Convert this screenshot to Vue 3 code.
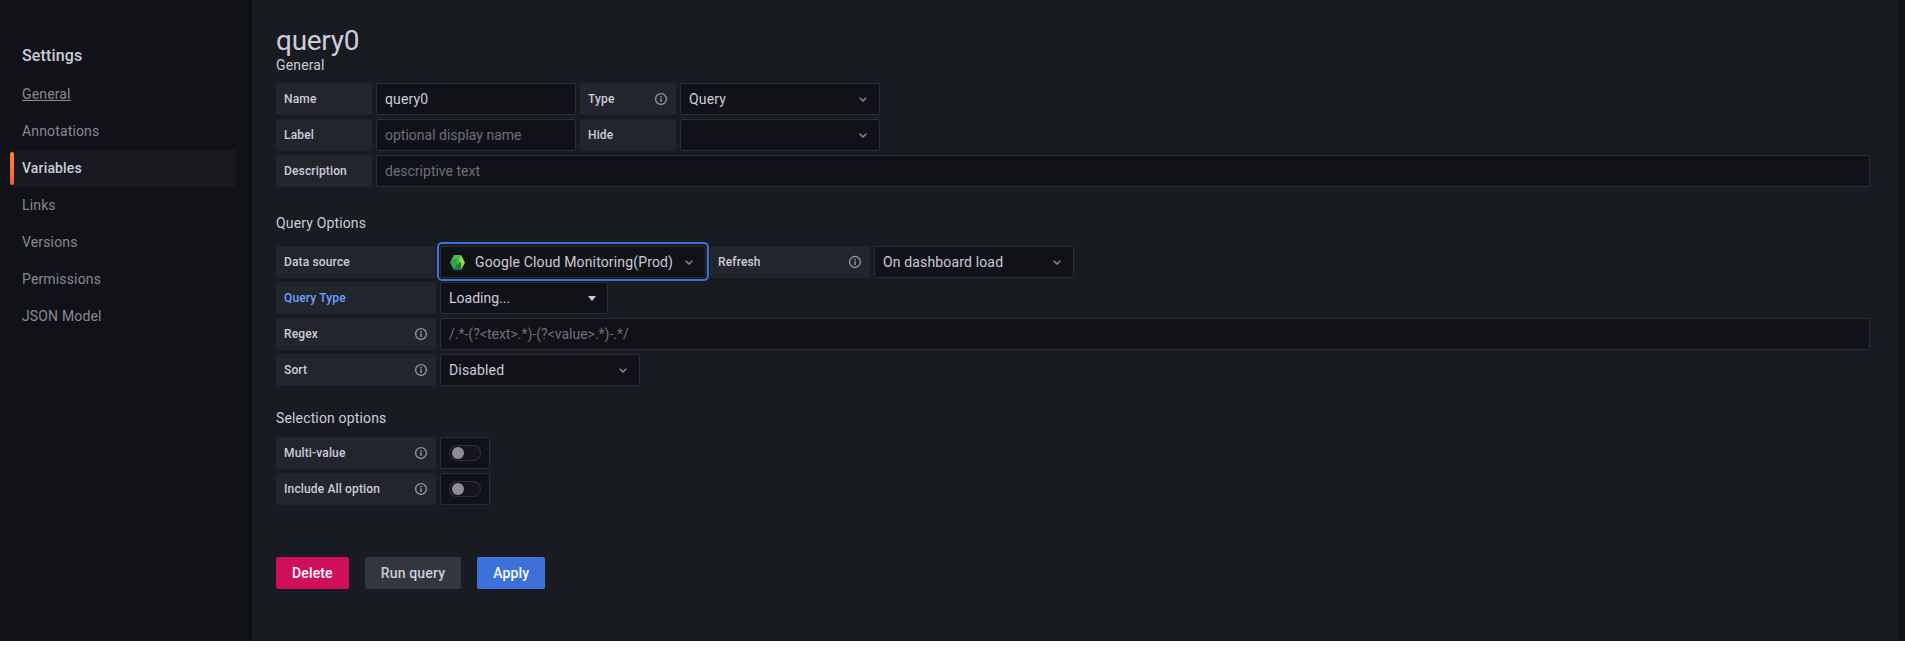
<script setup>
const nav = ['General', 'Annotations', 'Variables', 'Links', 'Versions', 'Permissions', 'JSON Model']
</script>

<template>
  <div class="page">
    <aside class="side">
      <h2 class="side-title">Settings</h2>
      <nav class="nav">
        <a v-for="n in nav" :key="n" class="nav-item" :class="{ active: n === 'Variables', under: n === 'General' }">{{ n }}</a>
      </nav>
    </aside>
    <main class="main">
      <h1 class="title">query0</h1>
      <div class="sub">General</div>

      <div class="rows">
        <div class="row">
          <div class="lab w96">Name</div>
          <div class="box w200 val">query0</div>
          <div class="lab w96">Type
            <svg class="info" viewBox="0 0 24 24"><circle cx="12" cy="12" r="9.3" fill="none" stroke="currentColor" stroke-width="2.4"/><rect x="10.7" y="10.8" width="2.6" height="6.4" fill="currentColor"/><rect x="10.7" y="6.8" width="2.6" height="2.6" fill="currentColor"/></svg>
          </div>
          <div class="box w200 sel val">Query
            <svg class="chev" viewBox="0 0 24 24"><path d="M7 10l5 5 5-5" fill="none" stroke="currentColor" stroke-width="2"/></svg>
          </div>
        </div>
        <div class="row">
          <div class="lab w96">Label</div>
          <div class="box w200 ph">optional display name</div>
          <div class="lab w96">Hide</div>
          <div class="box w200 sel">
            <svg class="chev" viewBox="0 0 24 24"><path d="M7 10l5 5 5-5" fill="none" stroke="currentColor" stroke-width="2"/></svg>
          </div>
        </div>
        <div class="row">
          <div class="lab w96">Description</div>
          <div class="box grow ph">descriptive text</div>
        </div>
      </div>

      <h3 class="sect q">Query Options</h3>
      <div class="rows">
        <div class="row">
          <div class="lab w160">Data source</div>
          <div class="box ds val">
            <svg class="logo" viewBox="0 0 15 15">
              <path d="M4 0H11L8 4.5H4.5L0 7.5Z" fill="#4cbb4f"/>
              <path d="M0 7.5L4.5 4.5L7 10.5L4 15Z" fill="#2fa84a"/>
              <path d="M4.5 4.5H8L10.5 7.5L7 10.5Z" fill="#3cb54a"/>
              <path d="M11 0L15 7.5L11 15L10.5 7.5L8 4.5Z" fill="#9ad14b"/>
              <path d="M4 15L7 10.5L10.5 7.5L11 15Z" fill="#11804a"/>
            </svg>
            <span class="ds-name">Google Cloud Monitoring(Prod)</span>
            <svg class="chev" viewBox="0 0 24 24"><path d="M7 10l5 5 5-5" fill="none" stroke="currentColor" stroke-width="2"/></svg>
          </div>
          <div class="lab w160">Refresh
            <svg class="info" viewBox="0 0 24 24"><circle cx="12" cy="12" r="9.3" fill="none" stroke="currentColor" stroke-width="2.4"/><rect x="10.7" y="10.8" width="2.6" height="6.4" fill="currentColor"/><rect x="10.7" y="6.8" width="2.6" height="2.6" fill="currentColor"/></svg>
          </div>
          <div class="box w200 sel val">On dashboard load
            <svg class="chev" viewBox="0 0 24 24"><path d="M7 10l5 5 5-5" fill="none" stroke="currentColor" stroke-width="2"/></svg>
          </div>
        </div>
        <div class="row">
          <div class="lab w160 blue">Query Type</div>
          <div class="box w168 sel val nols">Loading...
            <span class="caret"></span>
          </div>
        </div>
        <div class="row">
          <div class="lab w160">Regex
            <svg class="info" viewBox="0 0 24 24"><circle cx="12" cy="12" r="9.3" fill="none" stroke="currentColor" stroke-width="2.4"/><rect x="10.7" y="10.8" width="2.6" height="6.4" fill="currentColor"/><rect x="10.7" y="6.8" width="2.6" height="2.6" fill="currentColor"/></svg>
          </div>
          <div class="box grow ph">/.*-(?&lt;text&gt;.*)-(?&lt;value&gt;.*)-.*/</div>
        </div>
        <div class="row">
          <div class="lab w160">Sort
            <svg class="info" viewBox="0 0 24 24"><circle cx="12" cy="12" r="9.3" fill="none" stroke="currentColor" stroke-width="2.4"/><rect x="10.7" y="10.8" width="2.6" height="6.4" fill="currentColor"/><rect x="10.7" y="6.8" width="2.6" height="2.6" fill="currentColor"/></svg>
          </div>
          <div class="box w200 sel val">Disabled
            <svg class="chev" viewBox="0 0 24 24"><path d="M7 10l5 5 5-5" fill="none" stroke="currentColor" stroke-width="2"/></svg>
          </div>
        </div>
      </div>

      <h3 class="sect s">Selection options</h3>
      <div class="rows">
        <div class="row" v-for="t in ['Multi-value', 'Include All option']" :key="t">
          <div class="lab w160">{{ t }}
            <svg class="info" viewBox="0 0 24 24"><circle cx="12" cy="12" r="9.3" fill="none" stroke="currentColor" stroke-width="2.4"/><rect x="10.7" y="10.8" width="2.6" height="6.4" fill="currentColor"/><rect x="10.7" y="6.8" width="2.6" height="2.6" fill="currentColor"/></svg>
          </div>
          <div class="box sw"><span class="track"><span class="knob"></span></span></div>
        </div>
      </div>

      <div class="btns">
        <button class="btn del">Delete</button>
        <button class="btn run">Run query</button>
        <button class="btn apply">Apply</button>
      </div>
    </main>
    <div class="strip"></div>
  </div>
</template>

<style>
html, body { background: #fff; margin: 0; }
</style>

<style scoped>
.page {
  display: flex;
  height: 641px;
  overflow: hidden;
  font-family: Roboto, "Liberation Sans", sans-serif;
  font-size: 14px;
  letter-spacing: .01071em;
  color: #ccccdc;
  background: #181b1f;
}
.side {
  width: 252px;
  flex: none;
  box-sizing: border-box;
  background: #111217;
  padding: 45px 16px 0 10px;
}
.side-title {
  margin: 0 0 9px 12px;
  font-size: 16px;
  line-height: 22px;
  font-weight: 500;
  color: #ccccdc;
}
.nav { display: flex; flex-direction: column; }
.nav-item {
  height: 37px;
  line-height: 37px;
  padding-left: 12px;
  color: rgba(204, 204, 220, .65);
  border-radius: 2px;
  position: relative;
}
.nav-item.under { text-decoration: underline; }
.nav-item.active {
  color: #ccccdc;
  font-weight: 500;
  background: rgba(204, 204, 220, .04);
}
.nav-item.active::before {
  content: "";
  position: absolute;
  left: 0;
  top: 2px;
  bottom: 2px;
  width: 4px;
  border-radius: 2px;
  background: linear-gradient(0deg, #f55f3e, #ff8833);
}
.main {
  flex: 1;
  min-width: 0;
  padding: 23px 28px 0 24px;
}
.title {
  margin: 0 0 -2px;
  font-size: 28px;
  line-height: 36px;
  font-weight: 400;
  letter-spacing: -.01em;
  color: #ccccdc;
}
.sub { font-size: 14px; line-height: 16px; margin-bottom: 10px; }
.rows { display: flex; flex-direction: column; gap: 4px; }
.row { display: flex; height: 32px; gap: 4px; }
.lab {
  box-sizing: border-box;
  flex: none;
  display: flex;
  align-items: center;
  justify-content: space-between;
  padding: 0 8px;
  background: #22252b;
  border-radius: 2px;
  font-size: 12px;
  font-weight: 500;
  color: #ccccdc;
}
.lab.blue { color: #6e9fff; }
.w96 { width: 96px; }
.w160 { width: 160px; }
.w200 { width: 200px; }
.w168 { width: 168px; }
.grow { flex: 1; min-width: 0; }
.box {
  box-sizing: border-box;
  display: flex;
  align-items: center;
  padding: 0 8px;
  background: #111217;
  border: 1px solid rgba(204, 204, 220, .15);
  border-radius: 2px;
  font-size: 14px;
}
.val { color: #ccccdc; }
.nols { letter-spacing: 0; }
.ph { color: rgba(204, 204, 220, .5); letter-spacing: 0; }
.sel { justify-content: space-between; }
.chev { width: 16px; height: 16px; color: rgba(204, 204, 220, .65); flex: none; }
.sel .chev { margin-left: auto; }
.info { width: 14px; height: 14px; flex: none; color: rgba(204, 204, 220, .65); }
.ds {
  width: 266px;
  padding: 0 8px 0 9px;
  position: relative;
  z-index: 1;
}
.ds::after {
  content: "";
  position: absolute;
  box-sizing: border-box;
  top: -5px;
  left: -4px;
  right: -4px;
  bottom: -4px;
  border: 2px solid #3d71d9;
  border-radius: 5px;
  pointer-events: none;
}
.logo { width: 15px; height: 15px; flex: none; margin-right: 10px; }
.ds-name { flex: 1; white-space: nowrap; }
.caret {
  width: 0;
  height: 0;
  border-left: 4px solid transparent;
  border-right: 4px solid transparent;
  border-top: 5px solid #ccccdc;
  margin-right: 3px;
}
.sect {
  margin: 0;
  font-size: 14px;
  font-weight: 400;
  line-height: 16px;
  color: #ccccdc;
}
.sect.q { margin-top: 28px; margin-bottom: 15px; }
.sect.s { margin-top: 24px; margin-bottom: 11px; }
.sw { width: 50px; justify-content: center; padding: 0; }
.track {
  box-sizing: border-box;
  display: block;
  width: 32px;
  height: 16px;
  border: 1px solid rgba(204, 204, 220, .15);
  border-radius: 8px;
  background: #14161b;
  position: relative;
}
.knob {
  position: absolute;
  left: 2px;
  top: 1px;
  width: 12px;
  height: 12px;
  border-radius: 50%;
  background: #8e8e9a;
}
.btns { display: flex; gap: 16px; margin-top: 52px; }
.btn {
  height: 32px;
  border: 0;
  border-radius: 2px;
  padding: 0 16px;
  font-family: inherit;
  font-size: 14px;
  font-weight: 500;
  letter-spacing: inherit;
  color: #fff;
}
.del { background: #d10e5c; }
.run { color: #ccccdc; background: #33363c; }
.apply { background: #3d71d9; }
.strip { width: 7px; flex: none; background: #111217; }
</style>
